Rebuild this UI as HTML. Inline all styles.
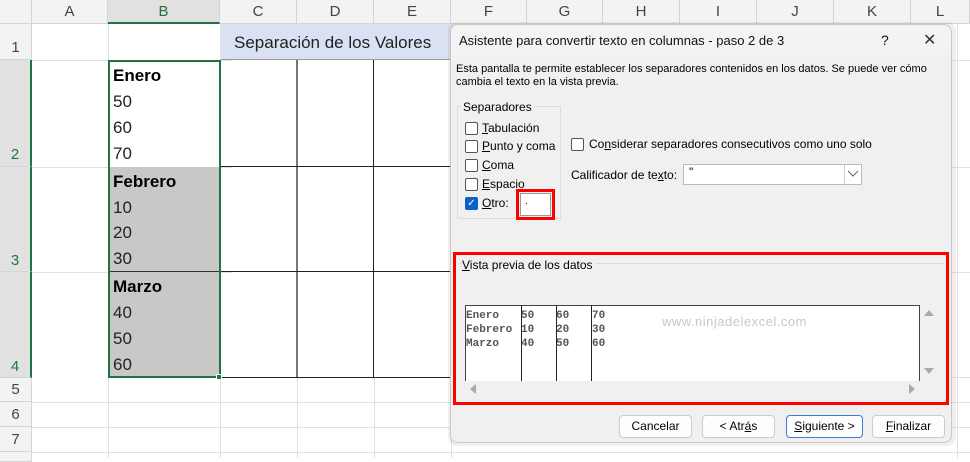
<!DOCTYPE html>
<html><head><meta charset="utf-8"><style>
*{margin:0;padding:0;box-sizing:border-box}
body{width:970px;height:458px;overflow:hidden;background:#fff;font-family:"Liberation Sans",sans-serif;position:relative}
.a{position:absolute}
.ch{top:0;height:24px;background:#f3f3f3;border-right:1px solid #d4d4d4;border-bottom:1px solid #d4d4d4;text-align:center;font-size:15px;line-height:24px;color:#444}
.rh{left:0;width:32px;background:#f3f3f3;border-bottom:1px solid #d4d4d4;border-right:1px solid #d4d4d4;font-size:15px;color:#444;text-align:center}
.vl{width:1px;background:#e1e1e1}
.hl{height:1px;background:#e1e1e1}
.t{font-size:17px;color:#222;left:113px}
.b{font-weight:bold;color:#000}
.d{font-size:12px;color:#000}
.cb{width:13px;height:13px;border:1px solid #555;border-radius:2px;background:#fff}
.btn{top:414px;height:23px;background:#fdfdfd;border:1px solid #ccc;border-radius:4px;font-size:12px;text-align:center;line-height:21px;color:#000}
.mono{font-family:"Liberation Mono",monospace;font-size:11px;font-weight:bold;color:#555;line-height:14px;white-space:pre;top:284px}
</style></head><body>
<div class="a vl" style="left:108px;top:24px;height:434px"></div>
<div class="a vl" style="left:220px;top:24px;height:434px"></div>
<div class="a vl" style="left:297px;top:378px;height:80px"></div>
<div class="a vl" style="left:374px;top:378px;height:80px"></div>
<div class="a vl" style="left:451px;top:0;height:458px"></div>
<div class="a vl" style="left:957px;top:24px;height:434px"></div>
<div class="a hl" style="left:32px;top:402px;width:938px"></div>
<div class="a hl" style="left:32px;top:427px;width:938px"></div>
<div class="a hl" style="left:32px;top:452px;width:938px"></div>
<div class="a hl" style="left:32px;top:60px;width:200px"></div>
<div class="a hl" style="left:32px;top:167px;width:200px"></div>
<div class="a hl" style="left:32px;top:272px;width:200px"></div>
<div class="a hl" style="left:952px;top:60px;width:18px"></div>
<div class="a hl" style="left:952px;top:167px;width:18px"></div>
<div class="a hl" style="left:952px;top:272px;width:18px"></div>
<div class="a hl" style="left:952px;top:377px;width:18px"></div>
<div class="a ch" style="left:0;width:32px"></div>
<div class="a ch" style="left:32px;width:76px">A</div>
<div class="a ch" style="left:108px;width:112px;background:#e1e1e1;border-bottom:2px solid #217346;color:#217346">B</div>
<div class="a ch" style="left:220px;width:77px">C</div>
<div class="a ch" style="left:297px;width:77px">D</div>
<div class="a ch" style="left:374px;width:77px">E</div>
<div class="a ch" style="left:451px;width:76px">F</div>
<div class="a ch" style="left:527px;width:76px">G</div>
<div class="a ch" style="left:603px;width:77px">H</div>
<div class="a ch" style="left:680px;width:77px">I</div>
<div class="a ch" style="left:757px;width:77px">J</div>
<div class="a ch" style="left:834px;width:77px">K</div>
<div class="a ch" style="left:911px;width:59px">L</div>
<div class="a rh" style="top:24px;height:36px;line-height:48px">1</div>
<div class="a rh" style="top:60px;height:107px;background:#e1e1e1;color:#217346;border-right:2px solid #217346;line-height:190px">2</div>
<div class="a rh" style="top:167px;height:105px;background:#e1e1e1;color:#217346;border-right:2px solid #217346;line-height:188px">3</div>
<div class="a rh" style="top:272px;height:106px;background:#e1e1e1;color:#217346;border-right:2px solid #217346;line-height:190px">4</div>
<div class="a rh" style="top:378px;height:24px;line-height:24px">5</div>
<div class="a rh" style="top:402px;height:25px;line-height:25px">6</div>
<div class="a rh" style="top:427px;height:25px;line-height:25px">7</div>
<div class="a rh" style="top:452px;height:10px"></div>
<div class="a" style="left:221px;top:24px;width:240px;height:36px;background:#d9e1f2;border-bottom:1px solid #999;font-size:17px;line-height:38px;padding-left:13px;color:#222">Separación de los Valores</div>
<div class="a" style="left:220px;top:60px;width:1px;height:318px;background:#222"></div>
<div class="a" style="left:296px;top:60px;width:2px;height:318px;background:#777"></div>
<div class="a" style="left:373px;top:60px;width:1px;height:318px;background:#222"></div>
<div class="a" style="left:220px;top:166px;width:235px;height:1px;background:#222"></div>
<div class="a" style="left:220px;top:271px;width:235px;height:1px;background:#222"></div>
<div class="a" style="left:220px;top:377px;width:235px;height:1px;background:#222"></div>
<div class="a" style="left:110px;top:167px;width:109px;height:210px;background:#c8c8c8"></div>
<div class="a" style="left:110px;top:271px;width:109px;height:1px;background:#333"></div>
<div class="a" style="left:108px;top:60px;width:113px;height:318px;border:2px solid #217346"></div>
<div class="a" style="left:216px;top:374px;width:6px;height:6px;background:#217346;border:1px solid #fff"></div>
<div class="a t b" style="top:66px">Enero</div>
<div class="a t" style="top:92px">50</div>
<div class="a t" style="top:118px">60</div>
<div class="a t" style="top:144px">70</div>
<div class="a t b" style="top:172px">Febrero</div>
<div class="a t" style="top:198px">10</div>
<div class="a t" style="top:223px">20</div>
<div class="a t" style="top:249px">30</div>
<div class="a t b" style="top:277px">Marzo</div>
<div class="a t" style="top:303px">40</div>
<div class="a t" style="top:329px">50</div>
<div class="a t" style="top:355px">60</div>
<div class="a" style="left:448px;top:22px;width:508px;height:424px;background:rgba(0,0,0,0.06);border-radius:9px"></div>
<div class="a" style="left:450px;top:24px;width:502px;height:419px;background:#f0f0f0;border:1px solid #c8c8c8;border-radius:8px;overflow:hidden">
 <div class="a" style="left:0;top:0;width:502px;height:30px;background:#f3f3f3"></div>
 <div class="a" style="left:8px;top:8px;font-size:13px;color:#111">Asistente para convertir texto en columnas - paso 2 de 3</div>
 <div class="a" style="left:430px;top:7px;font-size:14px;color:#111">?</div>
 <div class="a" style="left:472px;top:5px;font-size:16px;color:#333;font-weight:300">✕</div>
 <div class="a d" style="left:5px;top:38px;font-size:11px;line-height:13px;width:495px">Esta pantalla te permite establecer los separadores contenidos en los datos. Se puede ver cómo cambia el texto en la vista previa.</div>
 <div class="a" style="left:6px;top:81px;width:104px;height:113px;border:1px solid #dcdcdc"></div>
 <div class="a d" style="left:10px;top:75px;background:#f0f0f0;padding:0 2px">Separadores</div>
 <div class="a cb" style="left:14px;top:97px"></div><div class="a d" style="left:31px;top:96px"><u>T</u>abulación</div>
 <div class="a cb" style="left:14px;top:115px"></div><div class="a d" style="left:31px;top:114px"><u>P</u>unto y coma</div>
 <div class="a cb" style="left:14px;top:134px"></div><div class="a d" style="left:31px;top:133px"><u>C</u>oma</div>
 <div class="a cb" style="left:14px;top:153px"></div><div class="a d" style="left:31px;top:152px"><u>E</u>spacio</div>
 <div class="a cb" style="left:14px;top:172px;background:#0a62c4;border-color:#0a62c4;color:#fff;font-size:10px;line-height:11px;text-align:center">✓</div><div class="a d" style="left:31px;top:171px"><u>O</u>tro:</div>
 <div class="a" style="left:65px;top:164px;width:39px;height:31px;border:3px solid #f00"></div>
 <div class="a" style="left:69px;top:168px;width:31px;height:23px;background:#fff;border:1px solid #999;font-size:10px;padding-left:4px;line-height:16px">.</div>
 <div class="a cb" style="left:120px;top:113px"></div><div class="a d" style="left:138px;top:112px">Co<u>n</u>siderar separadores consecutivos como uno solo</div>
 <div class="a d" style="left:120px;top:143px">Calificador de te<u>x</u>to:</div>
 <div class="a" style="left:232px;top:139px;width:179px;height:21px;background:#fff;border:1px solid #bbb;font-size:12px;padding-left:5px">"</div>
 <div class="a" style="left:393px;top:140px;width:1px;height:19px;background:#ccc"></div>
 <svg class="a" style="left:396px;top:145px" width="12" height="8"><path d="M1 1 L6 6 L11 1" fill="none" stroke="#666" stroke-width="1"/></svg>
 <div class="a" style="left:2px;top:227px;width:496px;height:153px;border:3px solid #f00"></div>
 <div class="a" style="left:8px;top:238px;width:486px;height:1px;background:#dcdcdc"></div>
 <div class="a d" style="left:11px;top:233px;background:#f0f0f0;padding-right:2px"><u>V</u>ista previa de los datos</div>
 <div class="a" style="left:14px;top:280px;width:455px;height:76px;background:#fff;border:1px solid #444;border-bottom:none"></div>
 <div class="a" style="left:70px;top:280px;width:1px;height:76px;background:#222"></div>
 <div class="a" style="left:105px;top:280px;width:1px;height:76px;background:#222"></div>
 <div class="a" style="left:140px;top:280px;width:1px;height:76px;background:#222"></div>
 <div class="a mono" style="left:15px">Enero
Febrero
Marzo</div>
 <div class="a mono" style="left:70px">50
10
40</div>
 <div class="a mono" style="left:105px">60
20
50</div>
 <div class="a mono" style="left:141px">70
30
60</div>
 <div class="a" style="left:211px;top:289px;font-size:13px;color:#c8c8c8;letter-spacing:0.5px">www.ninjadelexcel.com</div>
 <svg class="a" style="left:473px;top:284px" width="10" height="7"><path d="M0 7 L5 1 L10 7Z" fill="#aaa"/></svg>
 <svg class="a" style="left:473px;top:343px" width="10" height="7"><path d="M0 0 L5 6 L10 0Z" fill="#aaa"/></svg>
 <svg class="a" style="left:18px;top:359px" width="7" height="10"><path d="M7 0 L1 5 L7 10Z" fill="#aaa"/></svg>
 <svg class="a" style="left:458px;top:359px" width="7" height="10"><path d="M0 0 L6 5 L0 10Z" fill="#aaa"/></svg>
 <div class="a btn" style="left:168px;top:390px;width:73px">Cancelar</div>
 <div class="a btn" style="left:251px;top:390px;width:73px">&lt; Atr<u>á</u>s</div>
 <div class="a btn" style="left:335px;top:390px;width:77px;border-color:#3b7fd0"><u>S</u>iguiente &gt;</div>
 <div class="a btn" style="left:421px;top:390px;width:73px"><u>F</u>inalizar</div>
</div>
</body></html>
